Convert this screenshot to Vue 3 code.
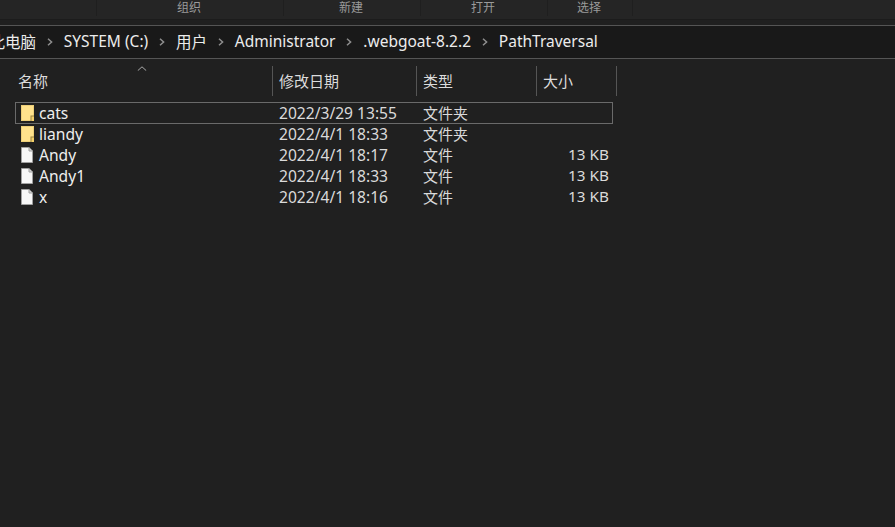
<script setup>
const groups = [
  { label: '', w: 97 },
  { label: '组织', w: 187 },
  { label: '新建', w: 137 },
  { label: '打开', w: 127 },
  { label: '选择', w: 85 }
]
const crumbs = ['SYSTEM (C:)', '用户', 'Administrator', '.webgoat-8.2.2', 'PathTraversal']
const cols = [
  { label: '名称', w: 257, sorted: true },
  { label: '修改日期', w: 144 },
  { label: '类型', w: 120 },
  { label: '大小', w: 80 }
]
const rows = [
  { name: 'cats', date: '2022/3/29 13:55', type: '文件夹', size: '', folder: true, selected: true },
  { name: 'liandy', date: '2022/4/1 18:33', type: '文件夹', size: '', folder: true },
  { name: 'Andy', date: '2022/4/1 18:17', type: '文件', size: '13 KB' },
  { name: 'Andy1', date: '2022/4/1 18:33', type: '文件', size: '13 KB' },
  { name: 'x', date: '2022/4/1 18:16', type: '文件', size: '13 KB' }
]
</script>

<template>
  <div class="win">
    <div class="ribbon">
      <div v-for="g in groups" :key="g.w" class="group" :style="{ width: g.w + 'px' }">{{ g.label }}</div>
    </div>
    <div class="gap"></div>
    <div class="crumbs">
      <span class="crumb first">此电脑</span>
      <template v-for="c in crumbs" :key="c">
        <svg class="chev" width="6" height="8" viewBox="0 0 6 8"><path d="M1 .8 L4.6 4 L1 7.2" fill="none" stroke="#8f8f8f" stroke-width="1.5" /></svg>
        <span class="crumb">{{ c }}</span>
      </template>
    </div>
    <div class="list">
      <div class="head">
        <div v-for="c in cols" :key="c.label" class="col" :style="{ width: c.w + 'px' }">
          {{ c.label }}
          <svg v-if="c.sorted" class="sort" width="10" height="5" viewBox="0 0 10 5"><path d="M.8 4.6 L5 .8 L9.2 4.6" fill="none" stroke="#a8a8a8" stroke-width="1" /></svg>
        </div>
      </div>
      <div class="rows">
        <div v-for="r in rows" :key="r.name" class="row" :class="{ selected: r.selected }">
          <div class="name">
            <svg v-if="r.folder" class="ico" width="13" height="16" viewBox="0 0 13 16">
              <rect x=".5" y=".5" width="12" height="15" fill="#ffe28c" stroke="#ecce78" />
              <path d="M9.5 10.5 H13 V16 H9.5 Z" fill="#9a8544" />
              <path d="M10.5 11.5 H13 V16 H10.5 Z" fill="#f5d06a" />
            </svg>
            <svg v-else class="ico doc" width="12" height="16" viewBox="0 0 12 16">
              <path d="M.5 .5 H8 L11.5 4 V15.5 H.5 Z" fill="#f7f7f7" stroke="#a0a0a0" />
              <path d="M8 .5 V4 H11.5" fill="#d6d6d6" stroke="#a0a0a0" />
            </svg>
            <span>{{ r.name }}</span>
          </div>
          <div class="date">{{ r.date }}</div>
          <div class="type">{{ r.type }}</div>
          <div class="size">{{ r.size }}</div>
        </div>
      </div>
    </div>
  </div>
</template>

<style>
html, body { margin: 0; background: #202020; }
</style>

<style scoped>
.win {
  width: 895px;
  height: 527px;
  overflow: hidden;
  background: #202020;
  font-family: "Noto Sans", "Noto Sans CJK SC", sans-serif;
  color: #e6e6e6;
}
.ribbon {
  display: flex;
  height: 20px;
  padding-bottom: 3px;
  box-sizing: border-box;
  background: #252525;
  border-bottom: 1px solid #1c1c1c;
}
.group {
  box-sizing: border-box;
  border-right: 1px solid #1f1f1f;
  height: 16px;
  padding-right: 2px;
  line-height: 15px;
  text-align: center;
  font-size: 12px;
  color: #9a9a9a;
}
.gap { height: 5px; background: #202020; }
.crumbs {
  display: flex;
  align-items: center;
  height: 34px;
  box-sizing: border-box;
  padding-bottom: 2px;
  background: #191919;
  border-top: 1px solid #555;
  border-bottom: 1px solid #555;
  font-size: 15.5px;
  color: #ececec;
  white-space: nowrap;
}
.crumb { display: block; }
.first { margin-left: -10.5px; }
.chev { margin: 2px 11px 0 10.8px; flex: none; }
.list { padding: 7px 0 0 16px; }
.head { display: flex; height: 30px; }
.col {
  position: relative;
  box-sizing: border-box;
  border-right: 1px solid #555;
  padding: 5px 0 0 2px;
  font-size: 15px;
  line-height: 20px;
  color: #dcdcdc;
}
.col + .col { padding-left: 6px; }
.sort { position: absolute; left: 121px; top: 0; }
.rows { margin-top: 6px; margin-left: -1px; width: 598px; }
.row {
  display: flex;
  height: 21px;
  align-items: center;
  box-sizing: border-box;
  padding-bottom: 1px;
  font-size: 15.6px;
  color: #dadada;
  border: solid transparent;
  border-width: 0 1px;
}
.selected { height: 22px; border: 1px solid #6a6a6a; padding-bottom: 0; }
.name { width: 263px; display: flex; align-items: center; padding-left: 5px; box-sizing: border-box; color: #eeeeee; flex: none; }
.ico { flex: none; margin-top: -1px; margin-right: 5px; }
.doc { margin-right: 6px; }
.date { width: 144px; flex: none; }
.type { width: 100px; flex: none; font-size: 15px; margin-top: -2px; }
.size { width: 86px; flex: none; text-align: right; font-size: 15.3px; margin-top: -2px; }
</style>
